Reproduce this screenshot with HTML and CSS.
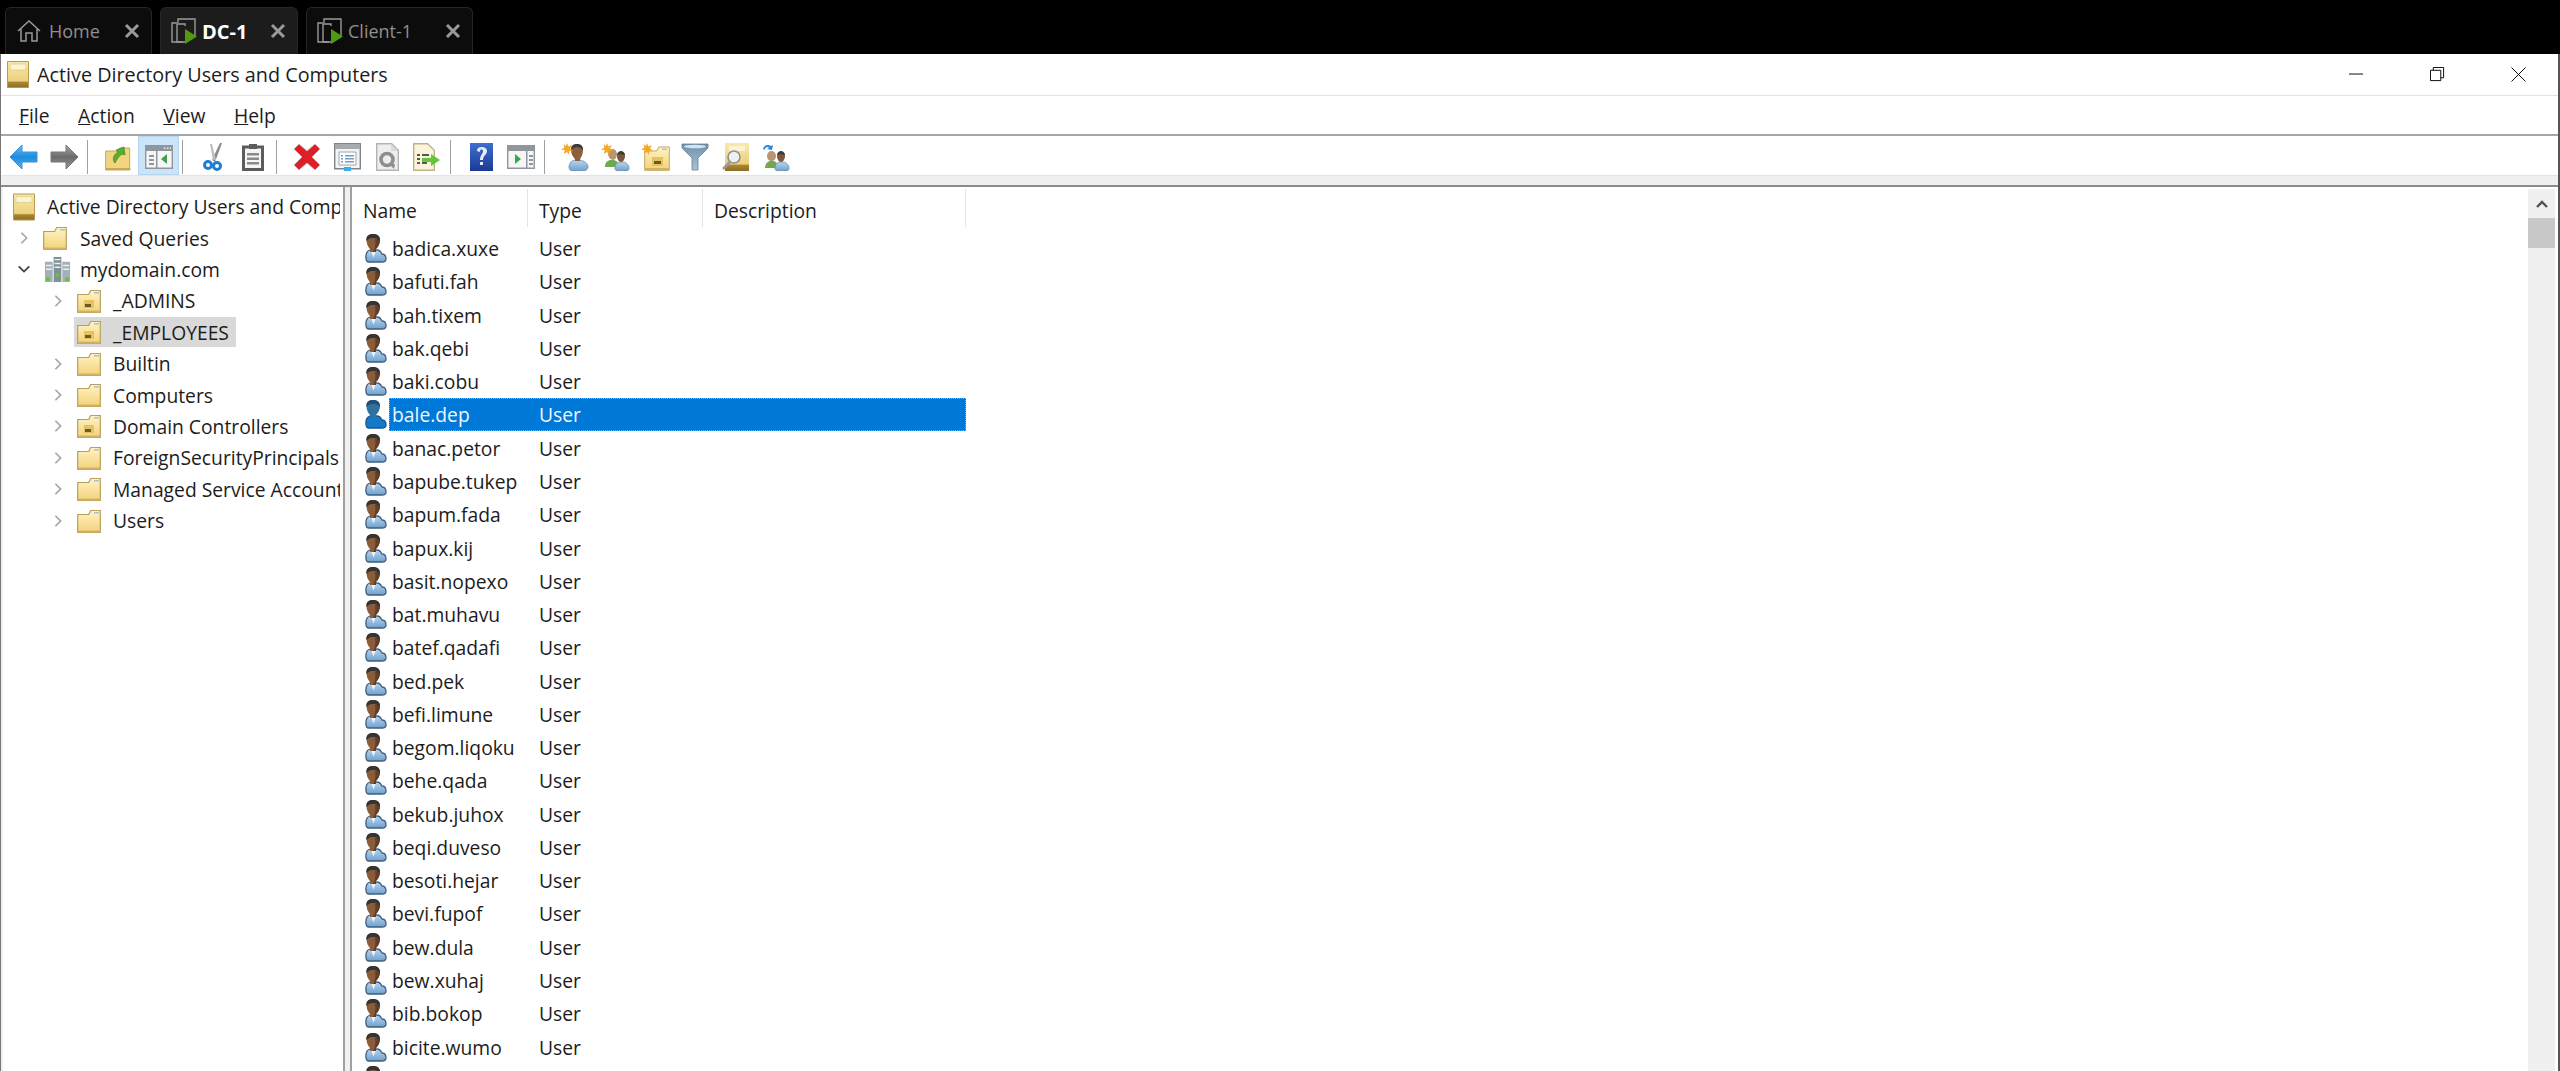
FILE: index.html
```html
<!DOCTYPE html>
<html lang="en">
<head>
<meta charset="utf-8">
<title>Active Directory Users and Computers</title>
<link rel="stylesheet" href="styles.css">
</head>
<body>
<svg class="defs" aria-hidden="true">
  <defs>
    <linearGradient id="gFolder" x1="0" y1="0" x2="0" y2="1"><stop offset="0" stop-color="#fff3c4"/><stop offset="1" stop-color="#f3d27a"/></linearGradient>
    <linearGradient id="gBook" x1="0" y1="0" x2="0" y2="1"><stop offset="0" stop-color="#f8e9ac"/><stop offset=".75" stop-color="#ecd07c"/><stop offset=".8" stop-color="#a8852f"/><stop offset="1" stop-color="#8d6f26"/></linearGradient>
    <linearGradient id="gBody" x1="0" y1="0" x2="0" y2="1"><stop offset="0" stop-color="#b9d6ef"/><stop offset="1" stop-color="#6f9fcc"/></linearGradient>
    <linearGradient id="gBack" x1="0" y1="0" x2="0" y2="1"><stop offset="0" stop-color="#6fc3f5"/><stop offset=".5" stop-color="#1a8ce0"/><stop offset="1" stop-color="#5db3ee"/></linearGradient>
    <linearGradient id="gFwd" x1="0" y1="0" x2="0" y2="1"><stop offset="0" stop-color="#a8a8a8"/><stop offset=".5" stop-color="#6b6b6b"/><stop offset="1" stop-color="#9a9a9a"/></linearGradient>
    <linearGradient id="gHelp" x1="0" y1="0" x2="0" y2="1"><stop offset="0" stop-color="#3f6fd0"/><stop offset="1" stop-color="#1b3a94"/></linearGradient>
    <linearGradient id="gFunnel" x1="0" y1="0" x2="0" y2="1"><stop offset="0" stop-color="#6f8fa8"/><stop offset="1" stop-color="#a9c3d8"/></linearGradient>

    <symbol id="user" viewBox="0 0 22 29">
      <path d="M1 24.500C.5 20 2 17 5 16h7c2 0 4 2 5 4 3 0 4 2.500 4 5 0 2-2 3-4 3H4c-2 0-3-1.500-3-3.500z" fill="url(#gBody)" stroke="#3f5f7e" stroke-width="1.300"/>
      <path d="M6 17l2.500 6.500L11 17z" fill="#e9f3fb"/>
      <path d="M1.500 6C1.500 1 5 0 8 0s7 1 7 6c0 4-2 7-4 9v3H5v-3C3 13 1.500 10 1.500 6z" fill="#8a5c3a"/>
      <path d="M10 5c2 0 5 0 5 1 0 4-2 7-4 9v3H8c2-3 3-8 2-13z" fill="#5f3f29"/>
      <path d="M1.500 7C.5 1 5 0 8 0s7.500 1 7 7C13 4.500 10 4 8 4S3.500 4.500 1.500 7z" fill="#343434"/>
    </symbol>
    <symbol id="userSel" viewBox="0 0 22 29">
      <path d="M1 24.500C.5 20 2 17 5 16h7c2 0 4 2 5 4 3 0 4 2.500 4 5 0 2-2 3-4 3H4c-2 0-3-1.500-3-3.500z" fill="#1479c8" stroke="#135a90" stroke-width="1.300"/>
      <path d="M1.500 6C1.500 1 5 0 8 0s7 1 7 6c0 4-2 7-4 9v3H5v-3C3 13 1.500 10 1.500 6z" fill="#2f729f"/>
      <path d="M1.500 7C.5 1 5 0 8 0s7.500 1 7 7C13 4.500 10 4 8 4S3.500 4.500 1.500 7z" fill="#1f5078"/>
    </symbol>
    <symbol id="folder" viewBox="0 0 24 24">
      <path d="M.7 5.500h11l2-4h9.600v22H.7z" fill="url(#gFolder)" stroke="#b8a05c" stroke-width="1.200"/>
      <path d="M1 21.500h22v2H1z" fill="#d4b265"/>
      <path d="M17 3h5v1.600h-5z" fill="#a9c4d6"/>
    </symbol>
    <symbol id="ou" viewBox="0 0 24 24">
      <path d="M.7 5.500h11l2-4h9.600v22H.7z" fill="url(#gFolder)" stroke="#b8a05c" stroke-width="1.200"/>
      <path d="M1 21.500h22v2H1z" fill="#d4b265"/>
      <path d="M17 3h5v1.600h-5z" fill="#a9c4d6"/>
      <path d="M7 11h10v8H7z" fill="#e2c263"/>
      <path d="M8 15h6v3H8z" fill="#6d5a22"/>
    </symbol>
    <symbol id="book" viewBox="0 0 22 27">
      <path d="M.5.500h21v26H.5z" fill="url(#gBook)" stroke="#b59a4f"/>
      <path d="M3 3h16v6H3z" fill="#fbf4d2" stroke="#d9c27a" stroke-width=".6"/>
    </symbol>
    <symbol id="domain" viewBox="0 0 28 28">
      <path d="M10 1h8v26h-8z" fill="#7f9097"/>
      <path d="M1 6h8v21H1zM19 6h8v21h-8z" fill="#a3b1b6"/>
      <path d="M11 3h6v1.500h-6zM11 7h6v1.500h-6zM11 11h6v1.500h-6zM2 9h6v1.500H2zM2 13h6v1.500H2zM20 9h6v1.500h-6zM20 13h6v1.500h-6z" fill="#edf2f4"/>
      <path d="M2 22h4v4H2zM22 22h4v4h-4zM12 18h4v4h-4z" fill="#6dbb4c"/>
    </symbol>
    <symbol id="chevR" viewBox="0 0 12 16"><path d="M3 2l6 6-6 6" fill="none" stroke="#a6a6a6" stroke-width="2"/></symbol>
    <symbol id="chevD" viewBox="0 0 16 12"><path d="M2 3l6 6 6-6" fill="none" stroke="#404040" stroke-width="2"/></symbol>
    <symbol id="rdp" viewBox="0 0 26 26">
      <path d="M7 5V1h17v17h-5" fill="none" stroke="#9a9a9a" stroke-width="1.400"/>
      <path d="M6 5H1v19h11" fill="none" stroke="#9a9a9a" stroke-width="1.400"/>
      <path d="M6 6h8v2M6 6v18h8" fill="none" stroke="#9a9a9a" stroke-width="1.400"/>
      <path d="M14 11l12 7.500L14 26z" fill="#4f9a11"/>
    </symbol>
    <symbol id="home" viewBox="0 0 24 22">
      <path d="M1 11L12 1l11 10M4 9v12h5v-8h6v8h5V9" fill="none" stroke="#999" stroke-width="1.500"/>
    </symbol>
    <symbol id="x" viewBox="0 0 16 16"><path d="M2 2l12 12M14 2L2 14" stroke="#9a9a9a" stroke-width="3"/></symbol>

    <symbol id="tBack" viewBox="0 0 30 28"><path d="M1 14L13 2v7h15v10H13v7z" fill="url(#gBack)" stroke="#3f8fcf"/></symbol>
    <symbol id="tFwd" viewBox="0 0 30 28"><path d="M29 14L17 2v7H2v10h15v7z" fill="url(#gFwd)" stroke="#777"/></symbol>
    <symbol id="tUp" viewBox="0 0 26 28">
      <path d="M.7 8h12l2-3h10v22H.7z" fill="#f4d57f" stroke="#c4a860"/>
      <path d="M.7 25h24.600v2H.7z" fill="#c9a855"/>
      <path d="M10 20c-3-3-2-8 3-11l-2-2 8-3 1 8-3-1c-3 2-5 5-7 9z" fill="#5cab33" stroke="#3f8a1e" stroke-width=".7"/>
    </symbol>
    <symbol id="tPane" viewBox="0 0 28 24">
      <path d="M.7.700h26.600v22.600H.7z" fill="#f4f6f7" stroke="#8f979c" stroke-width="1.400"/>
      <path d="M1 1h26v5H1z" fill="#8f979c"/>
      <path d="M22 2.500h1.500V4H22zM19 2.500h1.500V4H19zM25 2.500h1V4h-1z" fill="#eee"/>
      <path d="M11 6h1.500v17H11z" fill="#8f979c"/>
      <path d="M4 10h5v2H4zM4 14h5v2H4zM4 18h5v2H4z" fill="#8f979c"/>
      <path d="M22 9v10l-6-5z" fill="#3fa34a"/>
    </symbol>
    <symbol id="tShow" viewBox="0 0 28 24">
      <path d="M.7.700h26.600v22.600H.7z" fill="#f4f6f7" stroke="#8f979c" stroke-width="1.400"/>
      <path d="M1 1h26v5H1z" fill="#8f979c"/>
      <path d="M19 6h1.500v17H19z" fill="#8f979c"/>
      <path d="M22 10h4v2h-4zM22 14h4v2h-4zM22 18h4v2h-4z" fill="#8f979c"/>
      <path d="M8 9v10l6-5z" fill="#3fa34a"/>
    </symbol>
    <symbol id="tCut" viewBox="0 0 20 28">
      <path d="M9 17L17 0h2L12 19z" fill="#8a8a8a"/>
      <path d="M10 17L7 1h2l4 16z" fill="#bdbdbd"/>
      <circle cx="5" cy="22" r="3.500" fill="none" stroke="#1e7ed6" stroke-width="3"/>
      <circle cx="14" cy="23" r="3.500" fill="none" stroke="#1e7ed6" stroke-width="3"/>
    </symbol>
    <symbol id="tPaste" viewBox="0 0 22 28">
      <path d="M1.500 4h19v22.500h-19z" fill="#f5f5f5" stroke="#5c5c5c" stroke-width="3"/>
      <path d="M7 1h8v5H7z" fill="#5c5c5c"/>
      <path d="M5 10h12v2.500H5zM5 14.500h12V17H5zM5 19h12v2.500H5z" fill="#8a8a8a"/>
    </symbol>
    <symbol id="tDel" viewBox="0 0 28 28">
      <path d="M1 6l5-5 8 7 8-7 5 5-8 8 8 8-5 5-8-7-8 7-5-5 8-8z" fill="#dd1f27" stroke="#bdbdbd" stroke-width=".8" stroke-linejoin="round"/>
    </symbol>
    <symbol id="tProps" viewBox="0 0 27 28">
      <path d="M.7.700h25.600v25H.7z" fill="#f2f4f5" stroke="#808487" stroke-width="1.400"/>
      <path d="M1 1h25v5H1z" fill="#a6abae"/>
      <path d="M5 9h17v13H5z" fill="#fff" stroke="#9aa8b0"/>
      <path d="M7 12h2v1.500H7zM11 12h9v1.500h-9zM7 15h2v1.500H7zM11 15h9v1.500h-9zM7 18h2v1.500H7zM11 18h9v1.500h-9z" fill="#6f9ec0"/>
      <path d="M10 24h7v4h-7z" fill="#36b0e6"/>
    </symbol>
    <symbol id="tRefresh" viewBox="0 0 23 28">
      <path d="M.7.700h15l6.600 6.600v20H.7z" fill="#eeeeee" stroke="#b3b3b3" stroke-width="1.400"/>
      <path d="M15 1v7h7" fill="#dadada"/>
      <circle cx="11" cy="16.500" r="6" fill="none" stroke="#8e8e8e" stroke-width="3.600"/>
      <path d="M12 20l7 1-1 5z" fill="#8e8e8e"/>
    </symbol>
    <symbol id="tExport" viewBox="0 0 28 28">
      <path d="M.7.700h14l6.600 6.600v20H.7z" fill="#fbf4d8" stroke="#bdb38a" stroke-width="1.400"/>
      <path d="M4 11h3v2H4zM9 11h7v2H9zM4 15h3v2H4zM4 19h3v2H4zM9 19h5v2H9z" fill="#55584f"/>
      <path d="M9 15h9v-4l9 6-9 6v-4H9z" fill="#63c53d"/>
    </symbol>
    <symbol id="tHelp" viewBox="0 0 23 28">
      <path d="M0 0h23v28H0z" fill="url(#gHelp)"/>
      <path d="M7 8c0-3 2-4 4.500-4S17 5 17 8c0 4-4 4-4 9h-3c0-5 3-6 3-9 0-1-.5-1.500-1.500-1.500S10 7 10 9z" fill="#e6ecfa"/>
      <path d="M10 19h3v3h-3z" fill="#e6ecfa"/>
    </symbol>
    <symbol id="tNewUser" viewBox="0 0 28 28">
      <path d="M8 24c0-4 3-7 7-7h4c4 1 8 3 8 7 0 2-2 4-5 4H12c-3 0-4-2-4-4z" fill="url(#gBody)" stroke="#6b8aa8" stroke-width=".8"/>
      <path d="M10 7c0-4 3-6 6-6s6 2 6 6-2 8-3 9v2h-5v-2c-2-2-4-5-4-9z" fill="#8d5f3c"/>
      <path d="M10 7c0-4 2-6 6-6s6 2 6 6c-2-2-4-3-6-3s-4 1-6 3z" fill="#3c3c3c"/>
      <path d="M6 0l1.300 3.500L11 2 9 5.500l3 2-3.700.6L8 12 6 9l-3 2 .7-3.700L0 6.500l3.400-1.700L2.500 1 5 3z" fill="#f7a823"/>
    </symbol>
    <symbol id="tNewGroup" viewBox="0 0 29 28">
      <path d="M4 24c0-5 3-7 6-7h3c3 1 5 3 5 7z" fill="#6ea84f"/>
      <path d="M7 11c0-4 2-5 4.500-5S16 8 16 11s-2 6-4 6-5-3-5-6z" fill="#b89672"/>
      <path d="M14 25c0-4 3-6 5-6h3c3 0 6 3 6 6 0 2-1 3-3 3h-8c-2 0-3-1-3-3z" fill="url(#gBody)" stroke="#6b8aa8" stroke-width=".8"/>
      <path d="M16 13c0-3 2-4 4-4s4 1 4 4-2 6-4 6-4-3-4-6z" fill="#7e563a"/>
      <path d="M16 12c0-2 2-4 4-4s4 2 4 4c-3-1-5-1-8 0z" fill="#3c3c3c"/>
      <path d="M6 0l1.300 3.500L11 2 9 5.500l3 2-3.700.6L8 12 6 9l-3 2 .7-3.700L0 6.500l3.400-1.700L2.500 1 5 3z" fill="#f7a823"/>
    </symbol>
    <symbol id="tNewOu" viewBox="0 0 29 28">
      <path d="M3.700 8h12l2-4h10.600v23.300H3.700z" fill="url(#gFolder)" stroke="#c4a860"/>
      <path d="M4 25h24v2H4z" fill="#d4b265"/>
      <path d="M21 5.500h5V7h-5z" fill="#a9c4d6"/>
      <path d="M11 14h11v9H11z" fill="#e2c263"/>
      <path d="M13 18h7v3h-7z" fill="#6d5a22"/>
      <path d="M6 0l1.300 3.500L11 2 9 5.500l3 2-3.700.6L8 12 6 9l-3 2 .7-3.700L0 6.500l3.400-1.700L2.500 1 5 3z" fill="#f7a823"/>
    </symbol>
    <symbol id="tFilter" viewBox="0 0 28 28">
      <path d="M1 1h26v4L17 15v12h-6V15L1 5z" fill="url(#gFunnel)" stroke="#65819a" stroke-width=".8"/>
      <ellipse cx="14" cy="3.500" rx="11" ry="1.800" fill="#d5e3ed"/>
    </symbol>
    <symbol id="tFind" viewBox="0 0 28 28">
      <path d="M4 0h24v28H4z" fill="url(#gBook)"/>
      <path d="M8 3h16v5H8z" fill="#fbf4d2"/>
      <circle cx="13" cy="14" r="6" fill="#eef1f2" stroke="#8f8f8f" stroke-width="1.600"/>
      <path d="M9 19l-7 7" stroke="#9a9a9a" stroke-width="2.600"/>
    </symbol>
    <symbol id="tMove" viewBox="0 0 29 28">
      <path d="M2 6C3 2 7 1 10 3l2-1-1 5-5-1 2-1C7 3 4 4 3.500 7z" fill="#2a86d6"/>
      <path d="M4 25c0-4 3-7 5-7h3c3 0 5 3 5 7z" fill="#6ea84f"/>
      <path d="M6 13c0-3 2-5 4.500-5S15 10 15 13s-2 5-4.500 5S6 16 6 13z" fill="#b89672"/>
      <path d="M14 25c0-4 3-6 5-6h3c3 0 6 3 6 6 0 2-1 3-3 3h-8c-2 0-3-1-3-3z" fill="url(#gBody)" stroke="#6b8aa8" stroke-width=".8"/>
      <path d="M16 13c0-3 2-4 4-4s4 1 4 4-2 6-4 6-4-3-4-6z" fill="#7e563a"/>
      <path d="M16 12c0-2 2-4 4-4s4 2 4 4c-3-1-5-1-8 0z" fill="#3c3c3c"/>
    </symbol>
  </defs>
</svg>

<header class="tabbar">
  <div class="tab tab-home"><svg class="ti-home"><use href="#home"/></svg><span class="tab-label">Home</span><svg class="ti-x"><use href="#x"/></svg></div>
  <div class="tab tab-active tab-dc"><svg class="ti-rdp"><use href="#rdp"/></svg><span class="tab-label">DC-1</span><svg class="ti-x"><use href="#x"/></svg></div>
  <div class="tab tab-client"><svg class="ti-rdp"><use href="#rdp"/></svg><span class="tab-label">Client-1</span><svg class="ti-x"><use href="#x"/></svg></div>
</header>

<main class="window">
  <div class="titlebar">
    <svg class="app-icon"><use href="#book"/></svg>
    <span class="title">Active Directory Users and Computers</span>
    <div class="controls">
      <svg class="ctl" viewBox="0 0 16 16"><path d="M0 7.500h15" stroke="#000" fill="none"/></svg>
      <svg class="ctl" viewBox="0 0 16 16"><path d="M.5 3.500h11v11H.5zM3.500 3.500v-3h11v11h-3" stroke="#000" fill="none"/></svg>
      <svg class="ctl" viewBox="0 0 16 16"><path d="M.5.500l15 15M15.500.500l-15 15" stroke="#000" fill="none"/></svg>
    </div>
  </div>
  <nav class="menubar">
    <span class="menu"><u>F</u>ile</span>
    <span class="menu"><u>A</u>ction</span>
    <span class="menu"><u>V</u>iew</span>
    <span class="menu"><u>H</u>elp</span>
  </nav>
  <div class="toolbar">
    <span class="tb"><svg class="i30"><use href="#tBack"/></svg></span>
    <span class="tb"><svg class="i30"><use href="#tFwd"/></svg></span>
    <span class="sep sep-a"></span>
    <span class="tb"><svg class="i26"><use href="#tUp"/></svg></span>
    <span class="tb tb-on"><svg class="i28h"><use href="#tPane"/></svg></span>
    <span class="sep"></span>
    <span class="tb tb-b"><svg class="i20"><use href="#tCut"/></svg></span>
    <span class="tb"><svg class="i22"><use href="#tPaste"/></svg></span>
    <span class="sep"></span>
    <span class="tb tb-b"><svg class="i28"><use href="#tDel"/></svg></span>
    <span class="tb"><svg class="i27"><use href="#tProps"/></svg></span>
    <span class="tb"><svg class="i23"><use href="#tRefresh"/></svg></span>
    <span class="tb"><svg class="i28"><use href="#tExport"/></svg></span>
    <span class="sep"></span>
    <span class="tb tb-b"><svg class="i23"><use href="#tHelp"/></svg></span>
    <span class="tb"><svg class="i28h"><use href="#tShow"/></svg></span>
    <span class="sep"></span>
    <span class="tb tb-b"><svg class="i28"><use href="#tNewUser"/></svg></span>
    <span class="tb"><svg class="i29"><use href="#tNewGroup"/></svg></span>
    <span class="tb"><svg class="i29"><use href="#tNewOu"/></svg></span>
    <span class="tb"><svg class="i28"><use href="#tFilter"/></svg></span>
    <span class="tb"><svg class="i28"><use href="#tFind"/></svg></span>
    <span class="tb"><svg class="i29"><use href="#tMove"/></svg></span>
  </div>
  <div class="strip"></div>

  <div class="panes">
    <aside class="tree">
      <div class="node node-root"><svg class="tree-book"><use href="#book"/></svg><span class="node-text">Active Directory Users and Computers</span></div>
      <div class="node lvl1"><svg class="chev"><use href="#chevR"/></svg><svg class="fld"><use href="#folder"/></svg><span class="node-text">Saved Queries</span></div>
      <div class="node lvl1"><svg class="chev"><use href="#chevD"/></svg><svg class="fld fld-dom"><use href="#domain"/></svg><span class="node-text">mydomain.com</span></div>
      <div class="node lvl2"><svg class="chev"><use href="#chevR"/></svg><svg class="fld"><use href="#ou"/></svg><span class="node-text">_ADMINS</span></div>
      <div class="node lvl2 node-sel"><span class="chev"></span><span class="sel-box"><svg class="fld"><use href="#ou"/></svg><span class="node-text">_EMPLOYEES</span></span></div>
      <div class="node lvl2"><svg class="chev"><use href="#chevR"/></svg><svg class="fld"><use href="#folder"/></svg><span class="node-text">Builtin</span></div>
      <div class="node lvl2"><svg class="chev"><use href="#chevR"/></svg><svg class="fld"><use href="#folder"/></svg><span class="node-text">Computers</span></div>
      <div class="node lvl2"><svg class="chev"><use href="#chevR"/></svg><svg class="fld"><use href="#ou"/></svg><span class="node-text">Domain Controllers</span></div>
      <div class="node lvl2"><svg class="chev"><use href="#chevR"/></svg><svg class="fld"><use href="#folder"/></svg><span class="node-text">ForeignSecurityPrincipals</span></div>
      <div class="node lvl2"><svg class="chev"><use href="#chevR"/></svg><svg class="fld"><use href="#folder"/></svg><span class="node-text">Managed Service Accounts</span></div>
      <div class="node lvl2"><svg class="chev"><use href="#chevR"/></svg><svg class="fld"><use href="#folder"/></svg><span class="node-text">Users</span></div>
    </aside>

    <section class="list">
      <div class="list-main">
        <div class="list-head">
          <span class="col col-name">Name</span>
          <span class="col col-type">Type</span>
          <span class="col col-desc">Description</span>
        </div>
        <div class="row"><svg class="u"><use href="#user"/></svg><div class="cells"><span class="name">badica.xuxe</span><span>User</span></div></div>
        <div class="row"><svg class="u"><use href="#user"/></svg><div class="cells"><span class="name">bafuti.fah</span><span>User</span></div></div>
        <div class="row"><svg class="u"><use href="#user"/></svg><div class="cells"><span class="name">bah.tixem</span><span>User</span></div></div>
        <div class="row"><svg class="u"><use href="#user"/></svg><div class="cells"><span class="name">bak.qebi</span><span>User</span></div></div>
        <div class="row"><svg class="u"><use href="#user"/></svg><div class="cells"><span class="name">baki.cobu</span><span>User</span></div></div>
        <div class="row"><svg class="u"><use href="#userSel"/></svg><div class="cells cells-sel"><span class="name">bale.dep</span><span>User</span></div></div>
        <div class="row"><svg class="u"><use href="#user"/></svg><div class="cells"><span class="name">banac.petor</span><span>User</span></div></div>
        <div class="row"><svg class="u"><use href="#user"/></svg><div class="cells"><span class="name">bapube.tukep</span><span>User</span></div></div>
        <div class="row"><svg class="u"><use href="#user"/></svg><div class="cells"><span class="name">bapum.fada</span><span>User</span></div></div>
        <div class="row"><svg class="u"><use href="#user"/></svg><div class="cells"><span class="name">bapux.kij</span><span>User</span></div></div>
        <div class="row"><svg class="u"><use href="#user"/></svg><div class="cells"><span class="name">basit.nopexo</span><span>User</span></div></div>
        <div class="row"><svg class="u"><use href="#user"/></svg><div class="cells"><span class="name">bat.muhavu</span><span>User</span></div></div>
        <div class="row"><svg class="u"><use href="#user"/></svg><div class="cells"><span class="name">batef.qadafi</span><span>User</span></div></div>
        <div class="row"><svg class="u"><use href="#user"/></svg><div class="cells"><span class="name">bed.pek</span><span>User</span></div></div>
        <div class="row"><svg class="u"><use href="#user"/></svg><div class="cells"><span class="name">befi.limune</span><span>User</span></div></div>
        <div class="row"><svg class="u"><use href="#user"/></svg><div class="cells"><span class="name">begom.liqoku</span><span>User</span></div></div>
        <div class="row"><svg class="u"><use href="#user"/></svg><div class="cells"><span class="name">behe.qada</span><span>User</span></div></div>
        <div class="row"><svg class="u"><use href="#user"/></svg><div class="cells"><span class="name">bekub.juhox</span><span>User</span></div></div>
        <div class="row"><svg class="u"><use href="#user"/></svg><div class="cells"><span class="name">beqi.duveso</span><span>User</span></div></div>
        <div class="row"><svg class="u"><use href="#user"/></svg><div class="cells"><span class="name">besoti.hejar</span><span>User</span></div></div>
        <div class="row"><svg class="u"><use href="#user"/></svg><div class="cells"><span class="name">bevi.fupof</span><span>User</span></div></div>
        <div class="row"><svg class="u"><use href="#user"/></svg><div class="cells"><span class="name">bew.dula</span><span>User</span></div></div>
        <div class="row"><svg class="u"><use href="#user"/></svg><div class="cells"><span class="name">bew.xuhaj</span><span>User</span></div></div>
        <div class="row"><svg class="u"><use href="#user"/></svg><div class="cells"><span class="name">bib.bokop</span><span>User</span></div></div>
        <div class="row"><svg class="u"><use href="#user"/></svg><div class="cells"><span class="name">bicite.wumo</span><span>User</span></div></div>
        <div class="row"><svg class="u"><use href="#user"/></svg></div>
      </div>
      <div class="scrollbar">
        <div class="sb-up"><svg class="sb-arrow" viewBox="0 0 12 8"><path d="M1 7l5-5 5 5" fill="none" stroke="#505050" stroke-width="2.400"/></svg></div>
        <div class="sb-thumb"></div>
      </div>
    </section>
  </div>
</main>
</body>
</html>
```

FILE: styles.css
```css
* { box-sizing: border-box; }
html, body { margin: 0; height: 100%; overflow: hidden; background: #000; }
body {
  font-family: "Open Sans", "Noto Sans", "Liberation Sans", sans-serif;
  font-size: 19.3px;
  color: #1c1c1c;
  display: flex;
  flex-direction: column;
}
.defs { position: absolute; width: 0; height: 0; }

/* Remote desktop tab bar */
.tabbar { height: 54px; flex: none; background: #000; display: flex; gap: 8px; padding: 7px 0 0 5px; }
.tab {
  display: flex; align-items: center; height: 47px;
  background: #0c0c0c; border: 1px solid #262626; border-bottom: 0;
  border-radius: 6px 6px 0 0; color: #8f8f8f; font-size: 18px;
}
.tab-home { width: 147px; padding-left: 11px; }
.tab-dc { width: 138px; padding-left: 10px; }
.tab-client { width: 167px; padding-left: 10px; }
.tab-active { background: #1c1c1c; color: #fff; font-weight: 700; font-size: 20px; }
.ti-home { width: 24px; height: 22px; margin-right: 8px; flex: none; }
.ti-rdp { width: 26px; height: 26px; margin-right: 5px; flex: none; }
.ti-x { width: 16px; height: 16px; margin-left: auto; margin-right: 11px; flex: none; }

/* MMC window */
.window {
  flex: 1; min-height: 0; display: flex; flex-direction: column;
  background: #fff; border-left: 1px solid #777; border-right: 2px solid #555;
}
.titlebar { height: 42px; flex: none; display: flex; align-items: center; padding-left: 6px; border-bottom: 1px solid #e2e2e2; }
.app-icon { width: 22px; height: 27px; margin-right: 8px; flex: none; }
.title { white-space: nowrap; font-size: 19.8px; }
.controls { margin-left: auto; display: flex; gap: 66px; margin-right: 32px; }
.ctl { width: 15px; height: 15px; flex: none; }

.menubar { height: 40px; flex: none; display: flex; align-items: center; padding-left: 18px; gap: 28.6px; border-bottom: 2px solid #a6a6a6; }
.menu { white-space: nowrap; }

.toolbar { height: 39px; flex: none; display: flex; align-items: center; padding-left: 3px; }
.tb { width: 40px; height: 39px; flex: none; display: flex; align-items: center; justify-content: center; padding-top: 2px; }
.tb svg { filter: blur(.35px); }
.tb-on { background: #cce4f7; border: 1px solid #b5d6f0; width: 41px; }
.tb-b { margin-left: 10px; }
.sep { width: 1px; height: 34px; background: #a0a0a0; flex: none; margin-left: 3px; margin-top: 2px; }
.sep-a { margin-right: 10px; }
.i30 { width: 30px; height: 28px; }
.i26 { width: 26px; height: 28px; }
.i28h { width: 28px; height: 24px; }
.i20 { width: 20px; height: 28px; }
.i22 { width: 22px; height: 28px; }
.i28 { width: 28px; height: 28px; }
.i27 { width: 27px; height: 28px; }
.i23 { width: 23px; height: 28px; }
.i29 { width: 29px; height: 28px; }
.strip { height: 12px; flex: none; background: #f0f0f0; border-top: 1px solid #e4e4e4; border-bottom: 2px solid #8a8a8a; }

.panes { flex: 1; min-height: 0; display: flex; background: #f0f0f0; padding-left: 2px; }

/* Tree pane */
.tree { width: 342px; flex: none; background: #fff; border-right: 2px solid #a0a0a0; padding-top: 4px; overflow: hidden; }
.node { display: flex; align-items: center; height: 31.4px; white-space: nowrap; overflow: hidden; margin-right: 3px; }
.node-text { flex: none; }
.node-root { padding-left: 10px; }
.tree-book { width: 22px; height: 28px; flex: none; margin-right: 12px; }
.lvl1 { padding-left: 14px; }
.lvl2 { padding-left: 48px; }
.chev { width: 14px; height: 14px; flex: none; margin-right: 12px; }
.fld { width: 24px; height: 24px; flex: none; margin-right: 13px; filter: blur(.3px); }
.fld-dom { width: 27px; height: 27px; margin-left: 1px; margin-right: 9px; }
.lvl2 .fld { margin-right: 12px; }
.sel-box { display: flex; align-items: center; background: #d9d9d9; height: 30px; margin-left: -3px; padding-left: 3px; width: 162px; }

/* List pane */
.list { flex: 1; min-width: 0; margin-left: 5px; background: #fff; border-left: 2px solid #a0a0a0; display: flex; overflow: hidden; }
.list-main { flex: 1; min-width: 0; overflow: hidden; }
.list-head { height: 45px; display: flex; align-items: flex-start; padding-top: 2px; }
.col { height: 38px; padding: 4px 0 0 11px; display: flex; align-items: center; border-right: 1px solid #e5e5e5; flex: none; }
.col-name { width: 176px; }
.col-type { width: 175px; }
.col-desc { width: 263px; }
.row { height: 33.27px; display: flex; align-items: center; padding-left: 13px; width: 614px; }
.u { width: 22px; height: 29px; flex: none; margin-right: 2px; filter: blur(.3px); }
.cells { flex: 1; height: 33px; display: flex; align-items: center; padding-left: 3px; }
.cells-sel { background: #0078d7; color: #edf6ff; border: 1px dotted #8fa8bc; padding-left: 2px; }
.name { width: 147px; flex: none; white-space: nowrap; }

.scrollbar { width: 27px; flex: none; margin: 2px 3px 0 0; background: #f0f0f0; display: flex; flex-direction: column; }
.sb-up { height: 29px; display: flex; align-items: center; justify-content: center; }
.sb-arrow { width: 12px; height: 8px; }
.sb-thumb { height: 30px; background: #c8c8c8; }
```
